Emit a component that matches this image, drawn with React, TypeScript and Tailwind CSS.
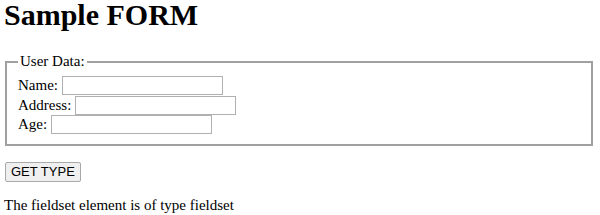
import React from "react";

export default function App() {
  return (
    <div className="font-['Liberation_Serif',serif] text-[15px] text-black bg-white w-[600px] h-[215px] overflow-hidden">
      <h1 className="text-[30px] font-bold leading-[30px] pl-[4px] m-0">Sample FORM</h1>
      <fieldset className="ml-[5px] mr-[7px] mt-[23px] border-2 border-[#a0a0a0] pl-[11px] pr-[11px] pb-[9px] pt-[6px]">
        <legend className="px-[2px] leading-[17px]">User Data:</legend>
        <div className="flex flex-col leading-[19.5px]">
          <div className="flex items-center h-[19.5px]">
            <span>Name:</span>
            <input className="ml-[4px] w-[161px] h-[19px] border border-[#b0b0b0] bg-white" />
          </div>
          <div className="flex items-center h-[19.5px]">
            <span>Address:</span>
            <input className="ml-[4px] w-[161px] h-[19px] border border-[#b0b0b0] bg-white" />
          </div>
          <div className="flex items-center h-[19.5px]">
            <span>Age:</span>
            <input className="ml-[4px] w-[161px] h-[19px] border border-[#b0b0b0] bg-white" />
          </div>
        </div>
      </fieldset>
      <div className="pl-[5px] mt-[14px]">
        <button className="h-[20px] px-[5px] border border-[#a9a9a9] bg-[#efefef] rounded-[2px] font-['Liberation_Sans',sans-serif] text-[13px] leading-[18px] text-black">
          GET TYPE
        </button>
      </div>
      <p className="pl-[4px] mt-[15px] leading-[17px]">The fieldset element is of type fieldset</p>
    </div>
  );
}
